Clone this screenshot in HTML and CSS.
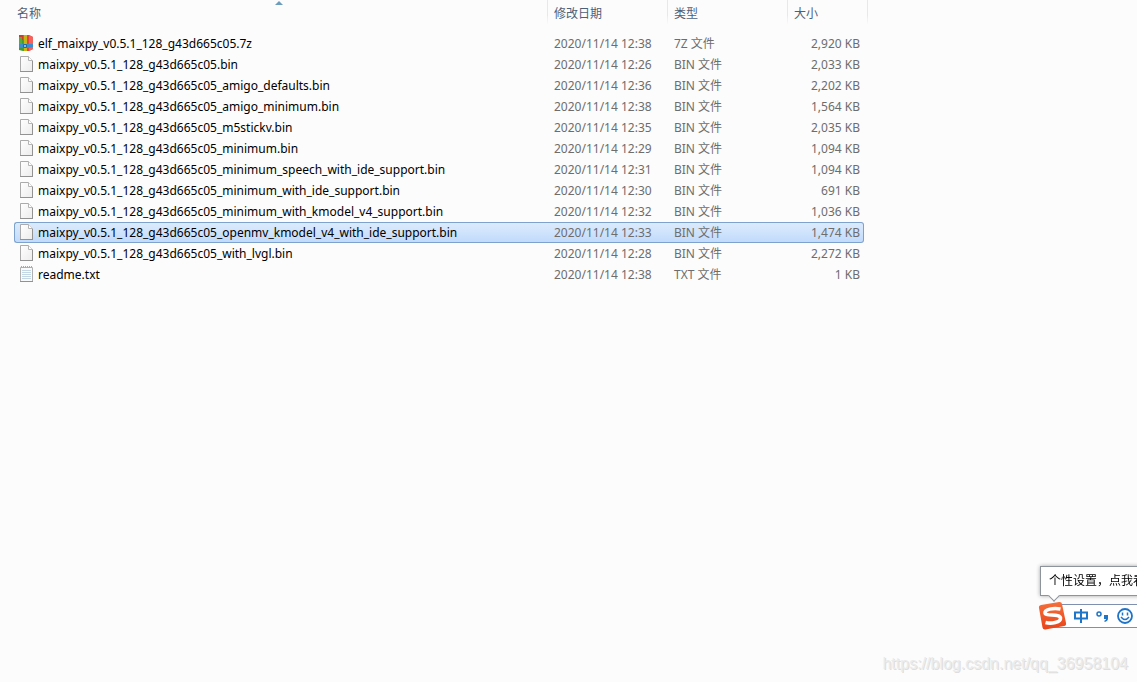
FILE: index.html
```html
<!DOCTYPE html>
<html lang="zh-CN">
<head>
  <meta charset="UTF-8">
  <title>maixpy</title>
  <meta name="viewport" content="width=device-width, initial-scale=1.0">
  <link rel="stylesheet" href="styles.css">
</head>
<body>
  <svg class="icon-defs" aria-hidden="true">
    <defs>
      <linearGradient id="paper" x1="0" y1="0" x2="1" y2="1">
        <stop offset="0" stop-color="#ffffff"/>
        <stop offset="1" stop-color="#ececec"/>
      </linearGradient>
      <linearGradient id="orange" x1="0" y1="0" x2="0" y2="1">
        <stop offset="0" stop-color="#f5703a"/>
        <stop offset="1" stop-color="#e8441a"/>
      </linearGradient>
      <symbol id="icon-file" viewBox="0 0 16 16">
        <path d="M2.5.5h8l4 4v11h-12z" fill="url(#paper)" stroke="#ababab"/>
        <path d="M2 15.5h13M14.5 5v10" stroke="#929292"/>
        <path d="M10.5.5v4h4" fill="#fff" stroke="#b5b5b5"/>
      </symbol>
      <symbol id="icon-text" viewBox="0 0 16 16">
        <path d="M2.5 1.5h12v14h-12z" fill="#fafafa" stroke="#b0b0b0"/>
        <path d="M4 4.5h9M4 6.5h9M4 8.5h9M4 10.5h9M4 12.5h9" stroke="#c3d8e4"/>
        <path d="M2 15.5h13" stroke="#929292"/>
        <path d="M3.5 0v2M5.5 0v2M7.5 0v2M9.5 0v2M11.5 0v2M13.5 0v2" stroke="#aaa"/>
      </symbol>
      <symbol id="icon-archive" viewBox="0 0 16 16">
        <path d="M1 0h4v16l-4-1z" fill="#3f9b35"/>
        <path d="M1 0h4v5H1z" fill="#c8402c"/>
        <path d="M1 2h3v7H1z" fill="#58ab3a"/>
        <path d="M5 0h4v16H5z" fill="#c9b418"/>
        <path d="M5 0h1v16H5z" fill="#7c8c1c"/>
        <path d="M9 0h2l4 2v12l-4 2H9z" fill="#e8403c"/>
        <path d="M11 0l4 2v12l-4 2z" fill="#f4625c"/>
        <path d="M1 9h14v3l-4 1H1z" fill="#3c8cd0"/>
        <path d="M5.5 9.500h3v3h-3z" fill="#7cc0ee" stroke="#2468a0"/>
      </symbol>
    </defs>
  </svg>

  <main class="file-view">
    <table class="file-list">
      <colgroup>
        <col class="col-name">
        <col class="col-date">
        <col class="col-type">
        <col class="col-size">
      </colgroup>
      <thead>
        <tr>
          <th aria-sort="ascending"><button type="button" class="sorted">名称</button></th>
          <th><button type="button">修改日期</button></th>
          <th><button type="button">类型</button></th>
          <th><button type="button">大小</button></th>
        </tr>
      </thead>
      <tbody>
        <tr><td><svg class="icon"><use href="#icon-archive"/></svg>elf_maixpy_v0.5.1_128_g43d665c05.7z</td><td>2020/11/14 12:38</td><td>7Z 文件</td><td>2,920 KB</td></tr>
        <tr><td><svg class="icon"><use href="#icon-file"/></svg>maixpy_v0.5.1_128_g43d665c05.bin</td><td>2020/11/14 12:26</td><td>BIN 文件</td><td>2,033 KB</td></tr>
        <tr><td><svg class="icon"><use href="#icon-file"/></svg>maixpy_v0.5.1_128_g43d665c05_amigo_defaults.bin</td><td>2020/11/14 12:36</td><td>BIN 文件</td><td>2,202 KB</td></tr>
        <tr><td><svg class="icon"><use href="#icon-file"/></svg>maixpy_v0.5.1_128_g43d665c05_amigo_minimum.bin</td><td>2020/11/14 12:38</td><td>BIN 文件</td><td>1,564 KB</td></tr>
        <tr><td><svg class="icon"><use href="#icon-file"/></svg>maixpy_v0.5.1_128_g43d665c05_m5stickv.bin</td><td>2020/11/14 12:35</td><td>BIN 文件</td><td>2,035 KB</td></tr>
        <tr><td><svg class="icon"><use href="#icon-file"/></svg>maixpy_v0.5.1_128_g43d665c05_minimum.bin</td><td>2020/11/14 12:29</td><td>BIN 文件</td><td>1,094 KB</td></tr>
        <tr><td><svg class="icon"><use href="#icon-file"/></svg>maixpy_v0.5.1_128_g43d665c05_minimum_speech_with_ide_support.bin</td><td>2020/11/14 12:31</td><td>BIN 文件</td><td>1,094 KB</td></tr>
        <tr><td><svg class="icon"><use href="#icon-file"/></svg>maixpy_v0.5.1_128_g43d665c05_minimum_with_ide_support.bin</td><td>2020/11/14 12:30</td><td>BIN 文件</td><td>691 KB</td></tr>
        <tr><td><svg class="icon"><use href="#icon-file"/></svg>maixpy_v0.5.1_128_g43d665c05_minimum_with_kmodel_v4_support.bin</td><td>2020/11/14 12:32</td><td>BIN 文件</td><td>1,036 KB</td></tr>
        <tr class="selected"><td><svg class="icon"><use href="#icon-file"/></svg>maixpy_v0.5.1_128_g43d665c05_openmv_kmodel_v4_with_ide_support.bin</td><td>2020/11/14 12:33</td><td>BIN 文件</td><td>1,474 KB</td></tr>
        <tr><td><svg class="icon"><use href="#icon-file"/></svg>maixpy_v0.5.1_128_g43d665c05_with_lvgl.bin</td><td>2020/11/14 12:28</td><td>BIN 文件</td><td>2,272 KB</td></tr>
        <tr><td><svg class="icon"><use href="#icon-text"/></svg>readme.txt</td><td>2020/11/14 12:38</td><td>TXT 文件</td><td>1 KB</td></tr>
      </tbody>
    </table>
  </main>

  <aside class="ime">
    <div class="ime-tip">个性设置，点我看</div>
    <div class="ime-bar">
      <button type="button" class="ime-logo" aria-label="S">
        <svg viewBox="0 0 30 30">
          <path d="M2 7Q1.500 4.500 4 4L22 1Q24.500.5 25 3L29 22Q29.500 24.500 27 25L8.500 28.500Q6 29 5.500 26.500z" fill="url(#orange)"/>
          <path d="M23.500 8C16 6.500 7.500 8.500 8 12C8.500 15.500 23 12.500 23.500 17C24 21.500 14 23 8.500 21.500" fill="none" stroke="#fff" stroke-width="3.600"/>
        </svg>
      </button>
      <button type="button" aria-label="中">
        <svg viewBox="0 0 16 16"><path d="M2 4.500h12v6H2zM8 1v14" fill="none" stroke="#1f74c8" stroke-width="2"/></svg>
      </button>
      <button type="button" aria-label="。，">
        <svg viewBox="0 0 16 16">
          <circle cx="4" cy="6" r="2" fill="none" stroke="#1f74c8" stroke-width="1.500"/>
          <path d="M9 7h4v3.500q0 2.500-3.500 3.500v-1.500q1.500-.5 1.500-1.500H9z" fill="#1f74c8"/>
        </svg>
      </button>
      <button type="button" aria-label="表情">
        <svg viewBox="0 0 16 16">
          <circle cx="8" cy="8" r="7" fill="none" stroke="#1f74c8" stroke-width="1.800"/>
          <path d="M5.500 4.500v3M10.500 4.500v3M4 9q4 5 8 0" fill="none" stroke="#1f74c8" stroke-width="1.500"/>
        </svg>
      </button>
    </div>
  </aside>

  <footer class="watermark">https://blog.csdn.net/qq_36958104</footer>
</body>
</html>
```
FILE: styles.css
```css
:root {
  --bg-color: #fcfcfc;
  --text-color: #000;
  --muted-color: #6d6d6d;
  --header-color: #4c607a;
  --line-color: #dfeaf5;
  --select-border: #7da2ce;
}

* {
  box-sizing: border-box;
}

body {
  margin: 0;
  min-height: 100vh;
  display: flex;
  flex-direction: column;
  background: var(--bg-color);
  color: var(--text-color);
  font-family: "Noto Sans", "Noto Sans CJK SC", sans-serif;
  font-size: 12px;
  line-height: 20px;
}

button {
  padding: 0;
  border: none;
  background: none;
  font: inherit;
  color: inherit;
  cursor: pointer;
}

.icon-defs {
  position: absolute;
  width: 0;
  height: 0;
}

.file-view {
  flex: 1;
  padding-left: 14px;
}

.file-list {
  width: 850px;
  table-layout: fixed;
  border-collapse: separate;
  border-spacing: 0;
}

.col-date,
.col-type {
  width: 120px;
}

.col-size {
  width: 76px;
}

th {
  height: 33px;
  padding: 0;
  vertical-align: top;
  text-align: left;
  font-weight: normal;
  color: var(--header-color);
}

th button {
  position: relative;
  display: block;
  width: 100%;
  height: 24px;
  padding: 4px 0 0 6px;
  text-align: left;
  border-right: 1px solid;
  border-image: linear-gradient(var(--line-color) 60%, transparent) 1;
}

th:first-child button {
  padding-left: 3px;
}

/* size column reaches a bit past the rows */
th:last-child button {
  width: 80px;
}

.sorted::before {
  content: "";
  position: absolute;
  top: 1px;
  left: 50%;
  margin-left: -6px;
  border: 4px solid transparent;
  border-top: none;
  border-bottom-color: #6d9dbd;
}

td {
  height: 21px;
  padding: 0 0 0 6px;
  line-height: 19px;
  white-space: nowrap;
  color: var(--muted-color);
  border: solid transparent;
  border-width: 1px 0;
}

td:first-child {
  padding-left: 3px;
  color: var(--text-color);
  border-left-width: 1px;
}

td:last-child {
  padding: 0 3px 0 0;
  text-align: right;
  border-right-width: 1px;
}

.icon {
  width: 16px;
  height: 16px;
  margin-right: 4px;
  vertical-align: -3px;
}

.selected td {
  background: linear-gradient(#dcebfd, #c1dbfc);
  border-color: var(--select-border);
}

.selected td:first-child {
  border-radius: 3px 0 0 3px;
}

.selected td:last-child {
  border-radius: 0 3px 3px 0;
}

.ime {
  position: fixed;
  right: 0;
  bottom: 52px;
  width: 101px;
  padding: 4px 0 0 4px;
  overflow: hidden;
}

.ime-tip {
  position: relative;
  width: 130px;
  height: 30px;
  padding-left: 8px;
  line-height: 28px;
  white-space: nowrap;
  background: #fff;
  border: 1px solid #8e949c;
  box-shadow: 0 0 4px rgba(0, 0, 0, 0.35);
}

.ime-tip::after {
  content: "";
  position: absolute;
  top: 25px;
  left: 9px;
  width: 7px;
  height: 7px;
  background: #fff;
  border: solid #8e949c;
  border-width: 0 1px 1px 0;
  transform: rotate(45deg);
}

.ime-bar {
  display: flex;
  align-items: center;
  gap: 6px;
  width: 130px;
  height: 24px;
  margin: 8px 0 2px 12px;
  background: #fff;
  border: 1px solid #7f8fb0;
}

.ime-bar button {
  width: 16px;
  height: 16px;
}

.ime-bar svg {
  display: block;
}

.ime-bar .ime-logo {
  flex: none;
  width: 30px;
  height: 30px;
  margin-left: -16px;
}

.watermark {
  padding: 0 9px 6px;
  text-align: right;
  font-family: "Liberation Sans", Arial, sans-serif;
  font-size: 16px;
  line-height: 24px;
  color: #ebebeb;
  text-shadow: 1px 1px 0 #dedede;
}
```
